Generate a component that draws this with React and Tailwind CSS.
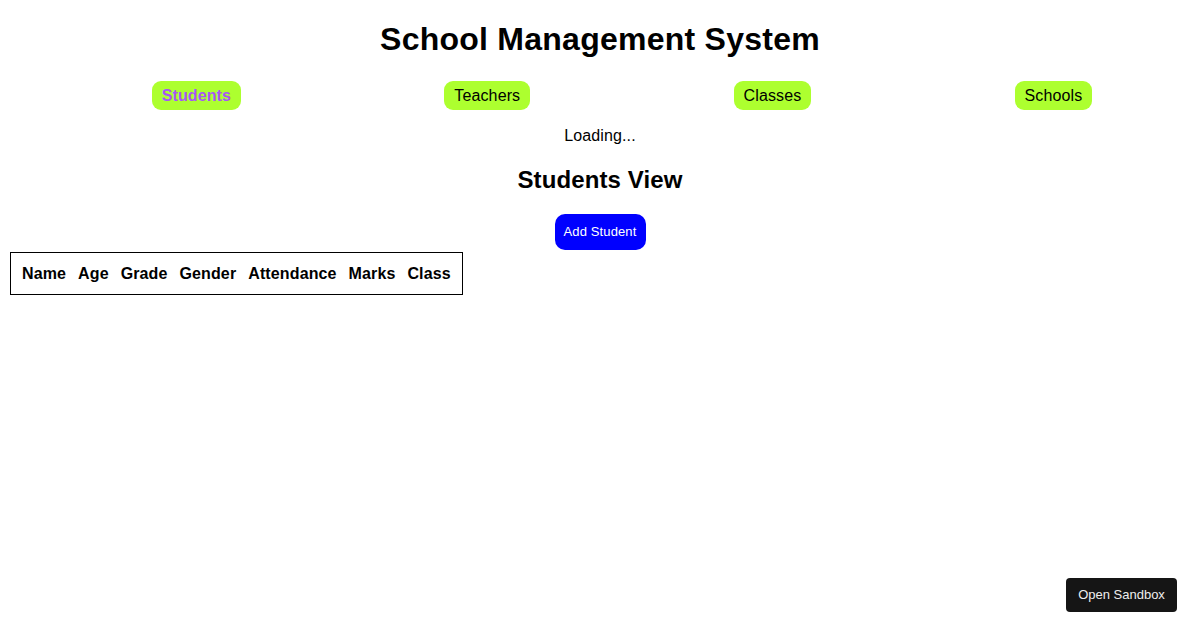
import React from "react";

const NAV = ["Students", "Teachers", "Classes", "Schools"];
const COLUMNS = ["Name", "Age", "Grade", "Gender", "Attendance", "Marks", "Class"];

export default function App() {
  const active = "Students";

  return (
    <div className="min-h-[630px] bg-white text-black tracking-[0.12px] font-['Liberation_Sans',Arial,sans-serif]">
      <h1 className="pt-[21px] text-center text-[32px] font-bold leading-[37px] tracking-[0.25px]">
        School Management System
      </h1>

      {/* NAV */}
      <ul className="mt-[23px] ml-[50px] mr-[6px] flex justify-around">
        {NAV.map((item) => (
          <li key={item}>
            <button
              className={`h-[29px] rounded-[9px] bg-[#adff2f] px-[10px] text-[16px] leading-[29px] ${
                item === active ? "font-bold text-[#a855f7]" : "text-black"
              }`}
            >
              {item}
            </button>
          </li>
        ))}
      </ul>

      <p className="mt-[17px] text-center text-[16px] leading-[18px]">Loading...</p>

      <h2 className="mt-[21px] text-center text-[24px] font-bold leading-[28px]">Students View</h2>

      <div className="mt-[20px] flex justify-center">
        <button className="h-[36px] w-[91px] rounded-[10px] bg-[#0000ff] text-[13px] text-white">
          Add Student
        </button>
      </div>

      {/* TABLE */}
      <table className="mt-[2px] ml-[10px] border-separate border-spacing-[2px] border border-black px-[4px]">
        <thead>
          <tr>
            {COLUMNS.map((c) => (
              <th key={c} className="px-[5px] py-[9px] text-[16px] font-bold leading-[19px] tracking-[0.12px]">
                {c}
              </th>
            ))}
          </tr>
        </thead>
        <tbody></tbody>
      </table>

      <button className="fixed bottom-[18px] right-[23px] h-[34px] w-[111px] rounded-[4px] bg-[#151515] text-[13px] tracking-normal text-[#eeeeee]">
        Open Sandbox
      </button>
    </div>
  );
}
